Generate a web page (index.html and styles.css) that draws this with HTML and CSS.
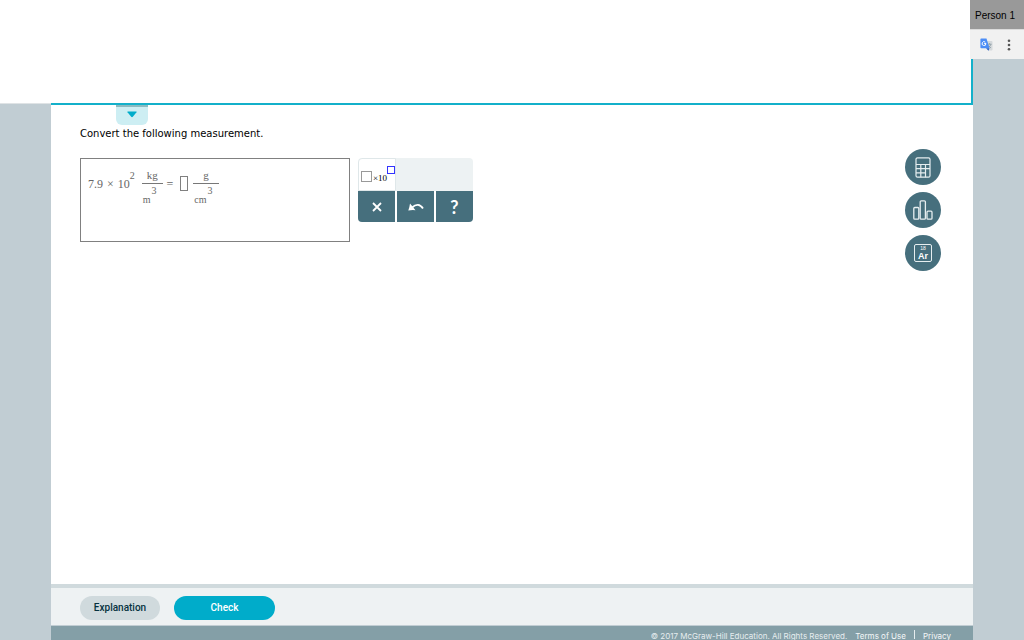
FILE: index.html
```html
<!DOCTYPE html>
<html lang="en">
<head>
  <meta charset="UTF-8">
  <meta name="viewport" content="width=device-width, initial-scale=1.0">
  <title>Convert the following measurement</title>
  <link rel="stylesheet" href="styles.css">
</head>
<body>
  <header class="top">
    <div class="top-side"></div>
    <div class="top-panel"></div>
  </header>

  <aside class="browser">
    <div class="person">Person 1</div>
    <div class="toolbar">
      <button type="button" class="translate" aria-label="Translate">
        <svg width="13" height="13" viewBox="0 0 13 13">
          <path d="M5 3h6.500q1 0 1 1v7.500q0 1-1 1H8z" fill="#d5d9dc"/>
          <path d="M7.500 6.200h4M9.500 5.200v1M11 6.200q-.8 2.300-3 3.800M8.500 7.500q1 1.600 2.500 2.400" fill="none" stroke="#8b9aa3" stroke-width=".8"/>
          <path d="M1.200.5h5.300l3 9.800H1.200q-.8 0-.8-.8V1.300q0-.8.8-.8z" fill="#4c8df6"/>
          <path d="M6 10.300h3.500L8.500 12.700z" fill="#2b62c9"/>
          <path d="M5.300 4.200A1.900 1.900 0 1 0 5.900 5.500H4.200" fill="none" stroke="#fff" stroke-width="1"/>
        </svg>
      </button>
      <button type="button" class="menu" aria-label="Menu">
        <svg width="4" height="12" viewBox="0 0 4 12" fill="#555">
          <circle cx="2" cy="1.700" r="1.300"/><circle cx="2" cy="6" r="1.300"/><circle cx="2" cy="10.300" r="1.300"/>
        </svg>
      </button>
    </div>
  </aside>

  <div class="sheet">
    <main class="content">
      <section class="question">
        <button type="button" class="pull-tab" aria-label="Show header">
          <svg width="10" height="7" viewBox="0 0 10 7"><path d="M.8.500h8.400q.8 0 .3.700L5.800 5.800q-.8.900-1.600 0L.5 1.200Q0 .5.8.500z" fill="#00acca"/></svg>
        </button>
        <h1>Convert the following measurement.</h1>

        <div class="work">
          <div class="answer">
            <div class="equation">
              <span class="term"><span>7.9</span><span>×</span><span>10</span></span><sup>2</sup>
              <span class="frac">
                <span class="num">kg</span>
                <span class="den"><span>m</span><sup>3</sup></span>
              </span>
              <span class="term equals">=</span>
              <input type="text" class="blank" aria-label="Answer">
              <span class="frac">
                <span class="num">g</span>
                <span class="den"><span>cm</span><sup>3</sup></span>
              </span>
            </div>
          </div>

          <div class="palette">
            <div class="palette-top">
              <button type="button" class="sci" aria-label="Scientific notation">
                <span class="sci-base"></span><span class="sci-text">×10</span><span class="sci-exp"></span>
              </button>
            </div>
            <div class="palette-keys">
              <button type="button" aria-label="Clear">
                <svg width="12" height="12" viewBox="0 0 12 12"><path d="M2 2l8 8M10 2l-8 8" stroke="#fff" stroke-width="1.800"/></svg>
              </button>
              <button type="button" aria-label="Undo">
                <svg width="16" height="12" viewBox="0 0 16 12">
                  <path d="M4 6.500Q10.500.8 15 7.500" fill="none" stroke="#fff" stroke-width="1.800"/>
                  <path d="M2 2.500L7.500 9.200Q3.500 8.800.3 9.600Q1.600 6 2 2.500z" fill="#fff"/>
                </svg>
              </button>
              <button type="button" class="help" aria-label="Help">?</button>
            </div>
          </div>
        </div>
      </section>

      <nav class="tools">
        <button type="button" aria-label="Calculator">
          <svg width="16" height="21" viewBox="0 0 16 21" fill="none" stroke="#e6eef0" stroke-width="1.200">
            <rect x="1" y=".8" width="14" height="19.400" rx="1.500"/>
            <path d="M1 7.500h14M1 11.600h14M1 15.800h9.500M5.800 7.500v12.700M10.500 7.500v12.700"/>
          </svg>
        </button>
        <button type="button" aria-label="Data">
          <svg width="20" height="20" viewBox="0 0 20 20" fill="none" stroke="#e6eef0" stroke-width="1.300">
            <rect x=".8" y="7.500" width="5" height="11.700" rx="1"/>
            <rect x="7.200" y=".8" width="5.200" height="18.400" rx="1"/>
            <rect x="14" y="11.200" width="5" height="8" rx="1"/>
          </svg>
        </button>
        <button type="button" aria-label="Periodic table">
          <span class="element"><small>18</small><b>Ar</b></span>
        </button>
      </nav>
    </main>

    <div class="actions">
      <button type="button" class="explanation">Explanation</button>
      <button type="button" class="check">Check</button>
    </div>

    <footer class="legal">
      <span>© 2017 McGraw-Hill Education. All Rights Reserved.</span>
      <a href="#">Terms of Use</a>
      <i class="divider"></i>
      <a href="#">Privacy</a>
    </footer>
  </div>
</body>
</html>
```
FILE: styles.css
```css
* {
    box-sizing: border-box;
}

body {
    margin: 0;
    height: 100vh;
    display: flex;
    flex-direction: column;
    background: #c1cdd3;
    font-family: "Liberation Sans", Arial, sans-serif;
    color: #000;
}

button {
    padding: 0;
    border: none;
    background: none;
    font-family: inherit;
    cursor: pointer;
    display: flex;
    align-items: center;
    justify-content: center;
}

svg {
    display: block;
}

/* Header */
.top {
    display: flex;
    height: 105px;
    flex-shrink: 0;
    margin-right: 51px;
}

.top-side {
    width: 51px;
    height: 104px;
    background: #fff;
    border-bottom: 1px solid #dfe3e5;
}

.top-panel {
    flex: 1;
    background: #fff;
    border-bottom: 2px solid #13b0ca;
    border-right: 2px solid #13b0ca;
}

.browser {
    position: absolute;
    top: 0;
    right: 0;
    width: 54px;
}

.person {
    height: 30px;
    line-height: 31px;
    padding-left: 5px;
    background: #999;
    font-size: 10px;
    border-bottom: 1px solid #dcdcdc;
}

.toolbar {
    display: flex;
    align-items: center;
    height: 29px;
    padding-left: 10px;
    gap: 14px;
    background: #f1f1f1;
}

/* Page */
.sheet {
    flex: 1;
    min-height: 0;
    margin: 0 51px;
    display: flex;
    flex-direction: column;
    background: #fff;
}

.content {
    flex: 1;
    display: flex;
    justify-content: space-between;
    padding: 0 32px 0 29px;
}

.pull-tab {
    width: 32px;
    height: 20px;
    margin-left: 36px;
    padding-bottom: 3px;
    background: #cdeef3;
    border-top: 2px solid #8cbac0;
    border-radius: 0 0 6px 6px;
}

h1 {
    margin: 0 0 15px;
    font: 10px/18px Verdana, "DejaVu Sans", sans-serif;
}

.work {
    display: flex;
    align-items: flex-start;
    gap: 8px;
}

.answer {
    width: 270px;
    height: 84px;
    padding: 9px 7px;
    border: 1px solid #808080;
}

.equation {
    display: flex;
    align-items: flex-start;
    font: 12px/14px "Liberation Serif", "Times New Roman", serif;
    color: #666;
}

.equation sup {
    font-size: 10px;
    line-height: 14px;
    vertical-align: baseline;
}

.term {
    display: flex;
    gap: 4px;
    margin-top: 9px;
}

.term + sup {
    margin-top: 1px;
}

.frac {
    display: flex;
    flex-direction: column;
    margin-left: 7px;
}

.num {
    height: 16px;
    border-bottom: 1px solid #777;
    font-size: 11px;
    text-align: center;
}

.den {
    display: flex;
    align-items: flex-start;
    gap: 1px;
    padding: 0 6px 0 1px;
    font-size: 10px;
}

.den span {
    padding-top: 9px;
}

.equals {
    margin-left: 4px;
}

.blank {
    width: 8px;
    height: 15px;
    margin: 8px 0 0 7px;
    padding: 0;
    border: 1px solid #808080;
    background: #fff;
}

.blank + .frac {
    margin-left: 5px;
}

/* Input palette */
.palette {
    width: 115px;
    border-radius: 4px;
    overflow: hidden;
    background: #edf2f3;
}

.palette-top {
    height: 33px;
}

.sci {
    width: 38px;
    height: 33px;
    padding: 8px 0 0 2px;
    align-items: flex-start;
    justify-content: flex-start;
    background: #fff;
    border: 1px solid #dfe7e9;
    border-radius: 4px 0 0 0;
}

.sci-base {
    flex-shrink: 0;
    width: 11px;
    height: 11px;
    margin-top: 4px;
    border: 1px solid #999;
}

.sci-text {
    margin: 4px 0 0 1px;
    color: #000;
    font: 9px/14px "Liberation Serif", "Times New Roman", serif;
}

.sci-exp {
    flex-shrink: 0;
    width: 8px;
    height: 8px;
    margin-top: -1px;
    border: 1px solid #33f;
}

.palette-keys {
    display: grid;
    grid-template-columns: repeat(3, 1fr);
    gap: 2px;
    height: 31px;
    background: #fff;
}

.palette-keys button {
    background: #466f7d;
}

.palette-keys .help {
    color: #fff;
    font: 700 18px/20px Lato, sans-serif;
}

/* Side tools */
.tools {
    display: flex;
    flex-direction: column;
    gap: 7px;
    padding-top: 44px;
}

.tools button {
    width: 36px;
    height: 36px;
    border-radius: 50%;
    background: #466f7d;
}

.element {
    width: 18px;
    height: 18px;
    border: 1px solid #e6eef0;
    border-radius: 2px;
    display: flex;
    flex-direction: column;
    align-items: center;
    color: #fff;
}

.element small {
    font-size: 5px;
    line-height: 7px;
}

.element b {
    font-size: 9px;
    line-height: 8px;
}

/* Bottom bars */
.actions {
    display: flex;
    align-items: center;
    gap: 14px;
    height: 42px;
    padding: 2px 0 0 29px;
    background: #eef2f3;
    border-top: 4px solid #d0dadd;
    border-bottom: 1px solid #c1cdd3;
}

.actions button {
    height: 24px;
    border-radius: 12px;
    font: 500 10px/24px Roboto, sans-serif;
}

.explanation {
    width: 80px;
    background: #d0dadd;
    color: #05323f;
}

.actions .check {
    width: 101px;
    background: #00acca;
    color: #fff;
}

.legal {
    display: flex;
    justify-content: flex-end;
    align-items: flex-start;
    gap: 8px;
    height: 14px;
    flex-shrink: 0;
    padding: 4px 22px 0 0;
    overflow: hidden;
    background: #849fa7;
    color: #e6edef;
    font: 8px/12px Inter, sans-serif;
}

.legal a {
    color: #f5f8f9;
    text-decoration: none;
}

.divider {
    width: 1px;
    height: 9px;
    background: #e6edef;
}
```
